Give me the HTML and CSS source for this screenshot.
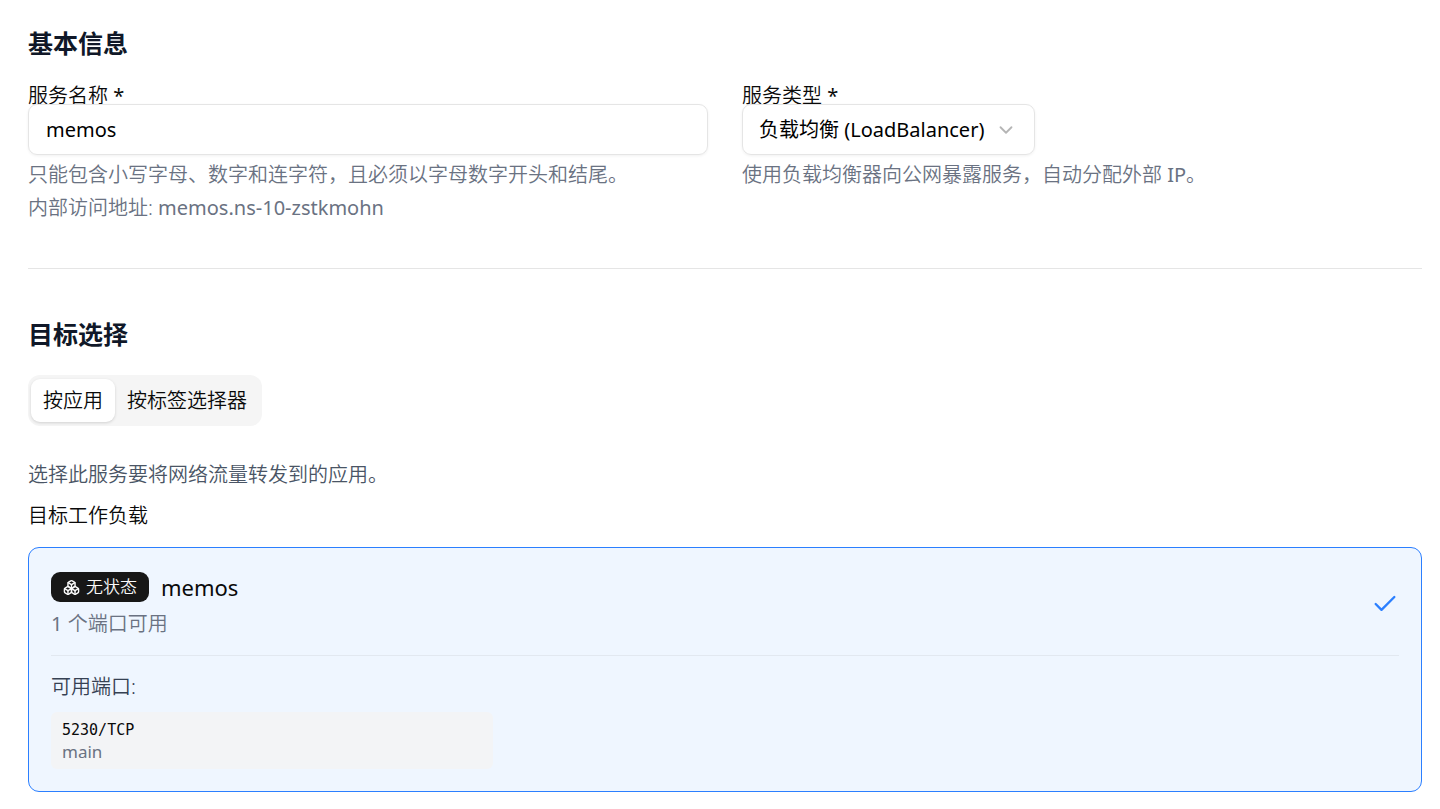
FILE: index.html
```
<!DOCTYPE html>
<html lang="zh-CN">
<head>
<meta charset="utf-8">
<meta name="viewport" content="width=device-width, initial-scale=1">
<title>服务</title>
<link rel="stylesheet" href="styles.css">
</head>
<body>
<main class="page">
  <section class="section">
    <h2 class="title">基本信息</h2>
    <div class="fields">
      <div class="field">
        <label class="label" for="name">服务名称 <span class="latin">*</span></label>
        <input class="control" id="name" type="text" value="memos">
        <p class="help">只能包含小写字母、数字和连字符，且必须以字母数字开头和结尾。</p>
        <p class="help address">内部访问地址: <span class="host">memos.ns-10-zstkmohn</span></p>
      </div>
      <div class="field">
        <label class="label" for="type">服务类型 <span class="latin">*</span></label>
        <div class="select">
          <select class="control" id="type">
            <option>负载均衡 (LoadBalancer)</option>
          </select>
          <svg class="chevron" viewBox="0 0 24 24" aria-hidden="true"><path d="m6 9 6 6 6-6"/></svg>
        </div>
        <p class="help">使用负载均衡器向公网暴露服务，自动分配外部 <span class="latin">IP</span>。</p>
      </div>
    </div>
  </section>

  <section class="section target">
    <h2 class="title">目标选择</h2>
    <div class="tabs" role="tablist">
      <button class="tab active" type="button" role="tab" aria-selected="true">按应用</button>
      <button class="tab" type="button" role="tab" aria-selected="false">按标签选择器</button>
    </div>
    <p class="desc">选择此服务要将网络流量转发到的应用。</p>
    <p class="group-label" id="workload">目标工作负载</p>
    <button class="card" type="button" aria-pressed="true">
      <span class="card-head">
        <span class="summary">
          <span class="name-row">
            <span class="badge">
              <svg class="boxes" viewBox="0 0 24 24" aria-hidden="true">
                <path d="M2.97 12.92A2 2 0 0 0 2 14.63v3.24a2 2 0 0 0 .97 1.71l3 1.8a2 2 0 0 0 2.06 0L12 19v-5.5l-5-3-4.03 2.42Z"/>
                <path d="m7 16.5-4.74-2.85"/><path d="m7 16.5 5-3"/><path d="M7 16.5v5.17"/>
                <path d="M12 13.5V19l3.97 2.38a2 2 0 0 0 2.06 0l3-1.8a2 2 0 0 0 .97-1.71v-3.24a2 2 0 0 0-.97-1.71L17 10.5l-5 3Z"/>
                <path d="m17 16.5-5-3"/><path d="m17 16.5 4.74-2.85"/><path d="M17 16.5v5.17"/>
                <path d="M7.97 4.42A2 2 0 0 0 7 6.13v4.37l5 3 5-3V6.13a2 2 0 0 0-.97-1.71l-3-1.8a2 2 0 0 0-2.06 0l-3 1.8Z"/>
                <path d="M12 8 7.26 5.15"/><path d="m12 8 4.74-2.85"/><path d="M12 13.5V8"/>
              </svg>
              无状态
            </span>
            <span class="name">memos</span>
          </span>
          <span class="count"><span class="latin">1</span> 个端口可用</span>
        </span>
        <svg class="check" viewBox="0 0 24 24" aria-hidden="true"><path d="M20 6 9 17l-5-5"/></svg>
      </span>
      <span class="ports">
        <span class="ports-label">可用端口:</span>
        <span class="port-grid">
          <span class="port">
            <span class="port-number">5230/TCP</span>
            <span class="port-name">main</span>
          </span>
        </span>
      </span>
    </button>
  </section>
</main>
</body>
</html>
```
FILE: styles.css
```
* {
  box-sizing: border-box;
}

body {
  margin: 0;
  background: #fff;
  color: #0a0a0a;
  font-family: "Noto Sans", "Noto Sans CJK SC", sans-serif;
  font-size: 20px;
  line-height: 28px;
  font-weight: 350;
}

h2,
p {
  margin: 0;
}

button,
input,
select {
  font: inherit;
  color: inherit;
}

.page {
  padding: 24px 18px 16px 28px;
}

.title {
  color: #101828;
  font-size: 25px;
  line-height: 38px;
  font-weight: 700;
}

.fields {
  display: grid;
  grid-template-columns: 1fr 1fr;
  gap: 34px;
  margin-top: 22px;
}

.field {
  display: flex;
  flex-direction: column;
}

.label {
  height: 20px;
  line-height: 24px;
}

.control {
  width: 100%;
  height: 51px;
  padding: 0 17px;
  border: 1px solid #e5e5e5;
  border-radius: 9px;
  background: transparent;
  box-shadow: 0 1px 3px rgba(0, 0, 0, 0.06);
  color: #000;
  font-weight: 400;
}

.select {
  display: grid;
  align-items: center;
  width: 293px;
}

.select > * {
  grid-area: 1 / 1;
}

.select .control {
  appearance: none;
  padding: 0 48px 0 16px;
}

.chevron {
  justify-self: end;
  width: 22px;
  height: 22px;
  margin-right: 18px;
  pointer-events: none;
  fill: none;
  stroke: #b5b5b5;
  stroke-width: 2;
  stroke-linecap: round;
  stroke-linejoin: round;
}

.help {
  margin-top: 6px;
  color: #6a7282;
}

.help.address {
  margin-top: 5px;
}

.host,
.latin {
  font-weight: 400;
}

.target {
  margin-top: 46px;
  padding-top: 46px;
  border-top: 1px solid #e5e5e5;
}

.tabs {
  display: inline-flex;
  height: 51px;
  margin-top: 22px;
  padding: 4px 3px;
  border-radius: 12px;
  background: #f5f5f5;
}

.tab {
  padding: 0 12px;
  border: 0;
  border-radius: 9px;
  background: transparent;
}

.tab.active {
  background: #fff;
  box-shadow: 0 1px 3px rgba(0, 0, 0, 0.15);
}

.desc {
  margin-top: 35px;
  color: #4a5565;
}

.group-label {
  margin-top: 13px;
}

.card {
  display: block;
  width: 100%;
  margin-top: 17px;
  padding: 22px;
  border: 1px solid #2b7fff;
  border-radius: 11px;
  background: #eff6ff;
  text-align: left;
}

.card-head {
  display: flex;
  align-items: center;
  justify-content: space-between;
}

.summary {
  display: flex;
  flex-direction: column;
  gap: 6px;
}

.name-row {
  display: flex;
  align-items: center;
  gap: 12px;
  height: 34px;
}

.badge {
  display: flex;
  align-items: center;
  gap: 6px;
  height: 30px;
  padding: 0 12px;
  border-radius: 9px;
  background: #171717;
  color: #fafafa;
  font-size: 17px;
}

.boxes {
  width: 17px;
  height: 17px;
  fill: none;
  stroke: currentColor;
  stroke-width: 2;
  stroke-linecap: round;
  stroke-linejoin: round;
}

.name {
  font-size: 22px;
  font-weight: 400;
}

.count {
  color: #6a7282;
}

.check {
  width: 28px;
  height: 28px;
  fill: none;
  stroke: #2b7fff;
  stroke-width: 2;
  stroke-linecap: round;
  stroke-linejoin: round;
}

.ports {
  display: block;
  margin-top: 17px;
  padding-top: 17px;
  border-top: 1px solid #e2e8f0;
}

.ports-label {
  display: block;
  color: #364153;
}

.port-grid {
  display: grid;
  grid-template-columns: repeat(3, 1fr);
  gap: 11px;
  margin-top: 11px;
}

.port {
  display: flex;
  flex-direction: column;
  padding: 7px 11px 6px;
  border-radius: 6px;
  background: #f3f4f6;
  line-height: 22px;
}

.port-number {
  font-family: "DejaVu Sans Mono", monospace;
  font-size: 15px;
}

.port-name {
  color: #6a7282;
  font-size: 17px;
  font-weight: 400;
}
```
